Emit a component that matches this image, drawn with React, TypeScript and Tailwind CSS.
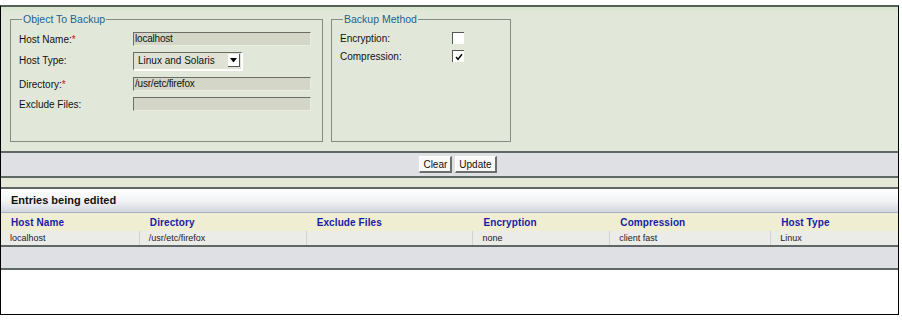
import React from "react";

const font = { fontFamily: '"Liberation Sans", Arial, sans-serif' };

function Field({ label, required, top, children }: { label: string; required?: boolean; top?: boolean; children: React.ReactNode }) {
  return (
    <div className={top ? "flex items-start" : "flex items-center"}>
      <div className={`w-[114px] text-[10px] text-[#111] ${top ? "pt-[1px]" : ""}`}>
        {label}
        {required && <span className="text-[#d01010]">*</span>}
      </div>
      {children}
    </div>
  );
}

function TextBox({ value }: { value: string }) {
  return (
    <div className="w-[178px] h-[14px] bg-[#d4d7c8] border-t border-l border-[#6b6e66] border-b border-b-[#e9ecdf] border-r border-r-[#e9ecdf] text-[10px] leading-[12px] pl-[1px] text-[#111] tracking-[-0.2px]">
      {value}
    </div>
  );
}

function Check({ checked }: { checked?: boolean }) {
  return (
    <div className="w-[12px] h-[12px] bg-white border-t border-l border-[#555] flex items-center justify-center">
      {checked && (
        <svg width="8" height="8" viewBox="0 0 8 8">
          <path d="M1 4 L3 6.3 L7 1.2" fill="none" stroke="#000" strokeWidth="1.4" />
        </svg>
      )}
    </div>
  );
}

function Btn({ children }: { children: React.ReactNode }) {
  return (
    <div className="h-[17px] px-[3px] bg-[#f8f8f6] border-t border-l border-[#ffffff] border-r-2 border-b-2 border-r-[#6d6f6c] border-b-[#6d6f6c] text-[10px] leading-[15px] text-[#111]">
      {children}
    </div>
  );
}

const cols = [
  { h: "Host Name", v: "localhost", w: 139 },
  { h: "Directory", v: "/usr/etc/firefox", w: 167 },
  { h: "Exclude Files", v: "", w: 167 },
  { h: "Encryption", v: "none", w: 137 },
  { h: "Compression", v: "client fast", w: 161 },
  { h: "Host Type", v: "Linux", w: 127 },
];

export default function App() {
  return (
    <div className="w-[902px] h-[320px] bg-white pt-[5px]" style={font}>
      <div className="w-[899px] h-[310px] border-l border-r border-b border-black border-t-2 border-t-[#55605a] flex flex-col">
        {/* form area */}
        <div className="h-[144px] bg-gradient-to-b from-[#d7e3cc] to-[#e2e8d9] to-[6px] flex gap-[8px] pl-[9px] pt-[5px]">
          <fieldset className="w-[313px] h-[130px] border border-[#868b84] pl-[8px]">
            <legend className="ml-[3px] px-[1px] text-[10.5px] text-[#1f5f8f]">Object To Backup</legend>
            <div className="flex flex-col">
              <div className="mt-[4px]">
                <Field label="Host Name:" required>
                  <TextBox value="localhost" />
                </Field>
              </div>
              <div className="mt-[5px]">
                <Field label="Host Type:" top>
                  <div className="w-[110px] h-[19px] bg-[#dfe2d5] border-t border-l border-[#6b6e66] border-b-2 border-r-2 border-b-white border-r-white flex items-center pl-[4px] text-[10px] text-[#111]">
                    <span className="flex-1">Linux and Solaris</span>
                    <div className="w-[12px] h-[13px] mr-[1px] bg-white border-r border-b border-[#555] flex items-center justify-center">
                      <svg width="7" height="5" viewBox="0 0 7 5">
                        <path d="M0 0 H7 L3.5 4.5 Z" fill="#000" />
                      </svg>
                    </div>
                  </div>
                </Field>
              </div>
              <div className="mt-[6px]">
                <Field label="Directory:" required>
                  <TextBox value="/usr/etc/firefox" />
                </Field>
              </div>
              <div className="mt-[5px]">
                <Field label="Exclude Files:">
                  <TextBox value="" />
                </Field>
              </div>
            </div>
          </fieldset>
          <fieldset className="w-[180px] h-[130px] border border-[#868b84] pl-[8px]">
            <legend className="ml-[3px] px-[1px] text-[10.5px] text-[#1f5f8f]">Backup Method</legend>
            <div className="flex flex-col gap-[3px] mt-[3px]">
              <div className="flex items-center">
                <div className="w-[112px] text-[10px] text-[#111]">Encryption:</div>
                <Check />
              </div>
              <div className="flex items-center">
                <div className="w-[112px] text-[10px] text-[#111]">Compression:</div>
                <Check checked />
              </div>
            </div>
          </fieldset>
        </div>
        {/* buttons */}
        <div className="h-[25px] border-t-2 border-[#5f6864] bg-[#dfe0e3] flex items-center justify-center gap-[3px] pl-[17px]">
          <Btn>Clear</Btn>
          <Btn>Update</Btn>
        </div>
        <div className="h-[11px] border-t-2 border-[#5f6864] bg-[#e3e9d6]" />
        {/* entries header */}
        <div className="h-[26px] border-t-2 border-[#5f6864] bg-gradient-to-b from-white via-[#f3f4f6] to-[#d2d6de] flex items-center pl-[10px] border-b border-b-[#a7b2c4]">
          <span className="text-[11px] font-bold text-[#111]">Entries being edited</span>
        </div>
        <div className="h-[18px] bg-[#efeed2] flex items-center">
          {cols.map((c) => (
            <div key={c.h} className="pl-[10px] text-[10px] font-bold tracking-[0.1px] text-[#1a1aa8]" style={{ width: c.w }}>
              {c.h}
            </div>
          ))}
        </div>
        <div className="h-[16px] bg-[#ebebe8] flex border-b-2 border-[#5f6864]">
          {cols.map((c, i) => (
            <div
              key={c.h}
              className={`pl-[9px] text-[9px] leading-[14px] text-[#222] ${i < cols.length - 1 ? "border-r border-[#d2d2cf]" : ""}`}
              style={{ width: c.w }}
            >
              {c.v}
            </div>
          ))}
        </div>
        <div className="h-[23px] bg-[#dfe0e3] border-b-2 border-[#5f6864]" />
        <div className="flex-1 bg-white" />
      </div>
    </div>
  );
}
